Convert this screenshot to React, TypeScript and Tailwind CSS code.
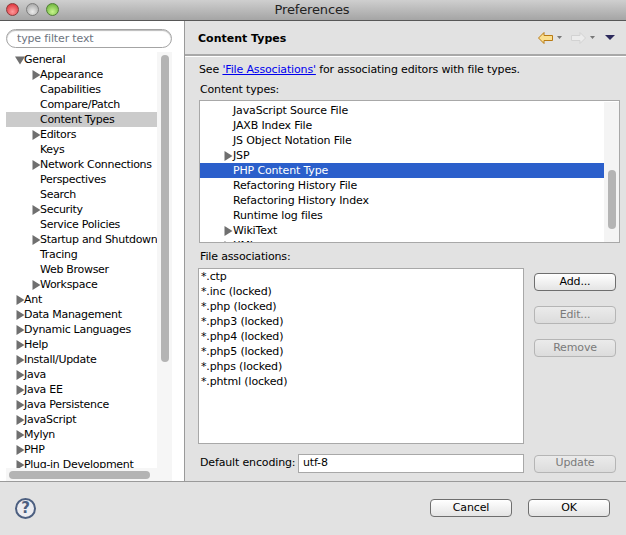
const font = { fontFamily: '"DejaVu Sans", sans-serif', letterSpacing: "-0.15px" };

function Tri({ open = false }: { open?: boolean }) {
  return (
    <svg width="10" height="10" viewBox="0 0 10 10" className="shrink-0">
      {open ? <path d="M0 1.5H10L5 9.5Z" fill="#6f6f6f" /> : <path d="M1.5 0V10L9.5 5Z" fill="#6f6f6f" />}
    </svg>
  );
}

function TreeRow({ label, indent, arrow, open, selected }: { label: string; indent: "a" | "b"; arrow?: boolean; open?: boolean; selected?: boolean }) {
  return (
    <div className={`flex h-[15px] items-center whitespace-nowrap text-[11px] leading-[15px] tracking-[-0.3px] ${selected ? "bg-[#cbcbcb]" : ""} ${indent === "a" ? "pl-[9px]" : "pl-[25px]"}`}>
      <span className="flex w-[9px] shrink-0 items-center">{arrow ? <Tri open={open} /> : null}</span>
      <span>{label}</span>
    </div>
  );
}

function ListTree({ label, arrow, selected }: { label: string; arrow?: boolean; selected?: boolean }) {
  return (
    <div className={`flex h-[15px] items-center whitespace-nowrap pl-[23px] text-[11px] leading-[15px] ${selected ? "bg-[#2b5fcb] text-white" : "text-black"}`}>
      <span className="flex w-[10px] shrink-0 items-center">{arrow ? <Tri /> : null}</span>
      <span>{label}</span>
    </div>
  );
}

function Btn({ label, disabled, w = "w-[82px]" }: { label: string; disabled?: boolean; w?: string }) {
  return (
    <button className={`flex h-[18px] ${w} items-center justify-center rounded-[4px] border bg-gradient-to-b text-[11px] ${disabled ? "border-[#b5b5b5] from-[#ebebeb] to-[#dcdcdc] text-[#7a7a7a]" : "border-[#6e6e6e] from-white to-[#e4e4e4] text-black"}`}>
      {label}
    </button>
  );
}

const general: [string, boolean, boolean?][] = [
  ["Appearance", true], ["Capabilities", false], ["Compare/Patch", false], ["Content Types", false, true],
  ["Editors", true], ["Keys", false], ["Network Connections", true], ["Perspectives", false], ["Search", false],
  ["Security", true], ["Service Policies", false], ["Startup and Shutdown", true], ["Tracing", false], ["Web Browser", false], ["Workspace", true],
];
const top = ["Ant", "Data Management", "Dynamic Languages", "Help", "Install/Update", "Java", "Java EE", "Java Persistence", "JavaScript", "Mylyn", "PHP", "Plug-in Development"];
const files = ["*.ctp", "*.inc (locked)", "*.php (locked)", "*.php3 (locked)", "*.php4 (locked)", "*.php5 (locked)", "*.phps (locked)", "*.phtml (locked)"];

export default function App() {
  return (
    <div className="relative flex h-[535px] w-[626px] flex-col overflow-hidden bg-[#e2e2e2] text-black" style={font}>
      <div className="relative flex h-[21px] shrink-0 items-center justify-center border-b border-[#575757] bg-gradient-to-b from-[#cfcfcf] to-[#a5a5a5] pr-[2px] text-[13px] text-[#222]">
        <div className="absolute left-[6px] top-[3px] flex gap-[7px]">
          <span className="h-[13px] w-[13px] rounded-full border border-[#8a3a3a] bg-[radial-gradient(circle_at_50%_70%,#ff9a9a,#d8202a)]" />
          <span className="h-[13px] w-[13px] rounded-full border border-[#7c7c7c] bg-[radial-gradient(circle_at_50%_70%,#ececec,#9a9a9a)]" />
          <span className="h-[13px] w-[13px] rounded-full border border-[#4f7f35] bg-[radial-gradient(circle_at_50%_70%,#c8f58e,#5fa92e)]" />
        </div>
        Preferences
      </div>

      <div className="flex h-[461px] shrink-0 border-b border-[#9a9a9a]">
        <div className="relative flex w-[185px] shrink-0 flex-col border-r border-[#9a9a9a] bg-white">
          <div className="px-[6px] pt-[8px]">
            <div className="flex h-[19px] w-[166px] items-center rounded-full border border-[#a4a4a4] bg-white pl-[10px] pt-[1px] text-[11px] text-[#6d7480] shadow-[inset_0_1px_1px_#bbb]">type filter text</div>
          </div>
          <div className="relative ml-[6px] mt-[4px] flex h-[430px] w-[166px] flex-col bg-[#f6f6f6]">
            <div className="h-[416px] w-[151px] overflow-hidden bg-white">
              <TreeRow label="General" indent="a" arrow open />
              {general.map(([l, a, s]) => <TreeRow key={l} label={l} indent="b" arrow={a} selected={s} />)}
              {top.map((l) => <TreeRow key={l} label={l} indent="a" arrow />)}
            </div>
            <div className="absolute left-[155px] top-[3px] h-[307px] w-[8px] rounded-full bg-[#b4b4b4]" />
            <div className="absolute left-[3px] top-[419px] h-[8px] w-[141px] rounded-full bg-[#b4b4b4]" />
          </div>
        </div>

        <div className="flex min-w-0 flex-1 flex-col">
          <div className="flex h-[35px] shrink-0 items-center justify-between border-b-2 border-b-[#a8a8a8] pl-[13px] pr-[11px] pt-[4px]">
            <span className="text-[11px] font-bold tracking-normal">Content Types</span>
            <div className="flex items-center pb-[4px]">
              <svg width="15" height="12" viewBox="0 0 15 12"><path d="M0.5 6L6 0.5V3.5H14.5V8.5H6V11.5Z" fill="#fbdf8e" stroke="#b87a14" /></svg>
              <svg width="5" height="3" viewBox="0 0 5 3" className="ml-[4px]"><path d="M0 0H5L2.5 3Z" fill="#777" /></svg>
              <svg width="15" height="12" viewBox="0 0 15 12" className="ml-[9px]"><path d="M14.5 6L9 0.5V3.5H0.5V8.5H9V11.5Z" fill="#ececec" stroke="#d2d2d2" /></svg>
              <svg width="5" height="3" viewBox="0 0 5 3" className="ml-[4px]"><path d="M0 0H5L2.5 3Z" fill="#777" /></svg>
              <svg width="10" height="5" viewBox="0 0 10 5" className="ml-[10px]"><path d="M0 0H10L5 5Z" fill="#2d2a5c" /></svg>
            </div>
          </div>
          <div className="flex flex-1 flex-col bg-[#e2e2e2] pl-[13px] pt-[6px] shadow-[inset_0_1px_0_#fff]">
            <div className="h-[15px] pl-[1px] text-[11px] leading-[15px]">
              See <span className="text-[#0000ee] underline">'File Associations'</span> for associating editors with file types.
            </div>
            <div className="mt-[5px] h-[15px] pl-[2px] text-[11px] leading-[15px]">Content types:</div>
            <div className="relative mt-[3px] ml-[1px] flex h-[143px] w-[421px] overflow-hidden border border-[#a8a8a8] bg-white pt-[1px]">
              <div className="flex-1 pt-[1px]">
                <ListTree label="JavaScript Source File" />
                <ListTree label="JAXB Index File" />
                <ListTree label="JS Object Notation File" />
                <ListTree label="JSP" arrow />
                <ListTree label="PHP Content Type" selected />
                <ListTree label="Refactoring History File" />
                <ListTree label="Refactoring History Index" />
                <ListTree label="Runtime log files" />
                <ListTree label="WikiText" arrow />
                <ListTree label="XML" arrow />
              </div>
              <div className="relative w-[15px] shrink-0 bg-[#f4f4f4]">
                <div className="absolute left-[4px] top-[68px] h-[59px] w-[8px] rounded-full bg-[#b4b4b4]" />
              </div>
            </div>
            <div className="mt-[6px] h-[15px] pl-[2px] text-[11px] leading-[15px]">File associations:</div>
            <div className="mt-[4px] flex h-[176px]">
              <div className="h-[176px] w-[326px] border border-[#a8a8a8] bg-white pl-[2px]">
                {files.map((f) => <div key={f} className="h-[15px] text-[11px] leading-[15px]">{f}</div>)}
              </div>
              <div className="ml-[10px] flex flex-col gap-[15px] pt-[5px]">
                <Btn label="Add..." />
                <Btn label="Edit..." disabled />
                <Btn label="Remove" disabled />
              </div>
            </div>
            <div className="mt-[10px] flex h-[19px] items-center">
              <span className="w-[100px] pl-[2px] text-[11px]">Default encoding:</span>
              <div className="flex h-[19px] w-[226px] items-center border border-[#a8a8a8] bg-white pl-[4px] text-[11px]">utf-8</div>
              <div className="ml-[10px]"><Btn label="Update" disabled /></div>
            </div>
          </div>
        </div>
      </div>

      <div className="flex flex-1 items-center justify-between pb-[1px] pl-[15px] pr-[16px]">
        <span className="flex h-[21px] w-[21px] items-center justify-center rounded-full border-2 border-[#4c5f80] bg-[#ececf0] text-[15px] font-bold leading-none text-[#4c5f80]">?</span>
        <div className="flex gap-[16px]">
          <Btn label="Cancel" />
          <Btn label="OK" />
        </div>
      </div>
    </div>
  );
}
